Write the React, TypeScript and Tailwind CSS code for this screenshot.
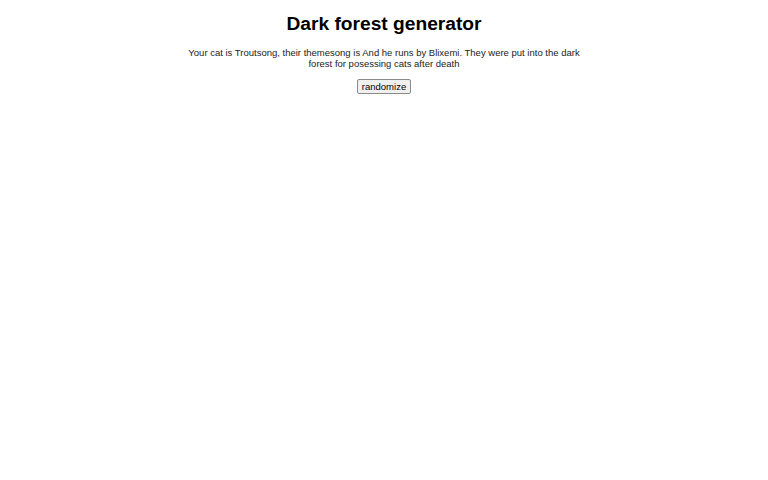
export default function App() {
  return (
    <div className="min-h-[480px] bg-white text-black font-['Liberation_Sans',Arial,sans-serif] flex flex-col items-center">
      <h1 className="mt-[12px] text-[19.2px] font-bold leading-[24px]">Dark forest generator</h1>
      <p className="mt-[11px] w-[400px] text-center text-[9.5px] leading-[11px] text-[#222]">
        Your cat is Troutsong, their themesong is And he runs by Blixemi. They were put into the dark forest for posessing cats after death
      </p>
      <button className="mt-[10px] px-[4px] h-[15px] text-[9.5px] leading-[12px] bg-[#f0f0f0] border border-[#8a8a8a] rounded-[2px]">
        randomize
      </button>
    </div>
  );
}
